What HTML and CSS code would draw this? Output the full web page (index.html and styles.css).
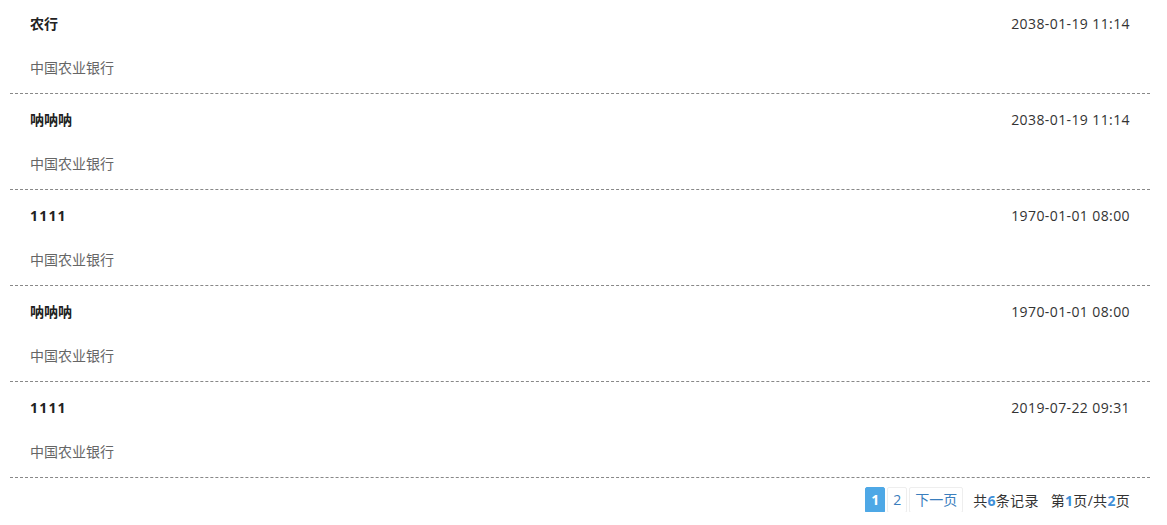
FILE: index.html
```html
<!DOCTYPE html>
<html lang="zh-CN">
<head>
<meta charset="utf-8">
<link rel="stylesheet" href="styles.css">
</head>
<body>
<div class="list">
  <div class="item">
    <div class="head"><span class="title">农行</span><span class="date">2038-01-19 11:14</span></div>
    <div class="desc">中国农业银行</div>
  </div>
  <div class="item">
    <div class="head"><span class="title">呐呐呐</span><span class="date">2038-01-19 11:14</span></div>
    <div class="desc">中国农业银行</div>
  </div>
  <div class="item">
    <div class="head"><span class="title num">1111</span><span class="date">1970-01-01 08:00</span></div>
    <div class="desc">中国农业银行</div>
  </div>
  <div class="item">
    <div class="head"><span class="title">呐呐呐</span><span class="date">1970-01-01 08:00</span></div>
    <div class="desc">中国农业银行</div>
  </div>
  <div class="item">
    <div class="head"><span class="title num">1111</span><span class="date">2019-07-22 09:31</span></div>
    <div class="desc">中国农业银行</div>
  </div>
  <div class="pager">
    <span class="pg active">1</span>
    <span class="pg">2</span>
    <span class="pg">下一页</span>
    <span class="info">共<b>6</b>条记录</span>
    <span class="info info-page">第<b>1</b>页/共<b>2</b>页</span>
  </div>
</div>
</body>
</html>
```
FILE: styles.css
```css
html, body {
  margin: 0;
  padding: 0;
  background: #fff;
}
body {
  font-family: "Open Sans", "Noto Sans CJK SC", sans-serif;
  font-size: 14px;
  color: #333;
}
.list {
  width: 1140px;
  margin-left: 10px;
  margin-top: -2px;
}
.item {
  height: 95px;
  border-bottom: 1px dashed #888;
  padding: 0 20px;
  display: flex;
  flex-direction: column;
}
.head {
  display: flex;
  justify-content: space-between;
  align-items: center;
  height: 20px;
  margin-top: 15px;
}
.title {
  font-weight: bold;
  color: #222;
}
.title.num {
  letter-spacing: 1.2px;
}
.date {
  color: #333;
  letter-spacing: 0.4px;
}
.desc {
  margin-top: 25px;
  height: 20px;
  line-height: 20px;
  color: #666;
}
.pager {
  display: flex;
  justify-content: flex-end;
  align-items: center;
  padding: 10px 20px 0 0;
  height: 24px;
}
.pg {
  height: 24px;
  line-height: 24px;
  padding: 0 5px;
  min-width: 8px;
  text-align: center;
  border: 1px solid #eee;
  border-radius: 2px;
  color: #3a7ebd;
  margin-left: 2px;
}
.pg.active {
  background: #4ea8e6;
  border-color: #4ea8e6;
  color: #fff;
  font-weight: bold;
}
.info {
  margin-left: 10px;
  color: #333;
  letter-spacing: 0.3px;
}
.info-page {
  margin-left: 12px;
}
.info b {
  color: #3f8fd8;
}
```
